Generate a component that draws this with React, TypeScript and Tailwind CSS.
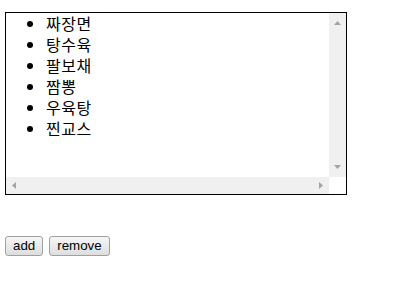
import React from "react"

const foods = ["짜장면", "탕수육", "팔보채", "짬뽕", "우육탕", "찐교스"]

function Arrow({ dir }: { dir: "up" | "down" | "left" | "right" }) {
  const pts = {
    up: "0,4 3.5,0 7,4",
    down: "0,0 3.5,4 7,0",
    left: "4,0 0,3.5 4,7",
    right: "0,0 4,3.5 0,7",
  }[dir]
  const vertical = dir === "up" || dir === "down"
  return (
    <svg width={vertical ? 7 : 4} height={vertical ? 4 : 7} viewBox={vertical ? "0 0 7 4" : "0 0 4 7"}>
      <polygon points={pts} fill="#a3a3a3" />
    </svg>
  )
}

export default function App() {
  return (
    <div className="bg-white pt-[12px] pl-[5px] font-['Liberation_Sans','Noto_Sans_CJK_KR',sans-serif] text-black">
      <div className="flex h-[183px] w-[342px] flex-col border border-black">
        <div className="flex min-h-0 flex-1">
          <ul className="flex-1 list-disc pl-[40px] text-[16px] leading-[21px] tracking-[0.5px] font-['Noto_Sans_CJK_KR',sans-serif]">
            {foods.map((f) => (
              <li key={f}>{f}</li>
            ))}
          </ul>
          <div className="flex w-[17px] flex-col items-center justify-between bg-[#f0f0f0] py-[8px]">
            <Arrow dir="up" />
            <Arrow dir="down" />
          </div>
        </div>
        <div className="flex h-[17px]">
          <div className="flex flex-1 items-center justify-between bg-[#f0f0f0] px-[6px]">
            <Arrow dir="left" />
            <Arrow dir="right" />
          </div>
          <div className="w-[17px] bg-white" />
        </div>
      </div>
      <div className="mt-[41px] flex gap-[6px]">
        <button className="h-[20px] rounded-[3px] border border-[#a0a0a0] bg-gradient-to-b from-[#f6f6f6] to-[#dedede] px-[7px] text-[13.333px] leading-none text-black">
          add
        </button>
        <button className="h-[20px] rounded-[3px] border border-[#a0a0a0] bg-gradient-to-b from-[#f6f6f6] to-[#dedede] px-[7px] text-[13.333px] leading-none text-black">
          remove
        </button>
      </div>
    </div>
  )
}
